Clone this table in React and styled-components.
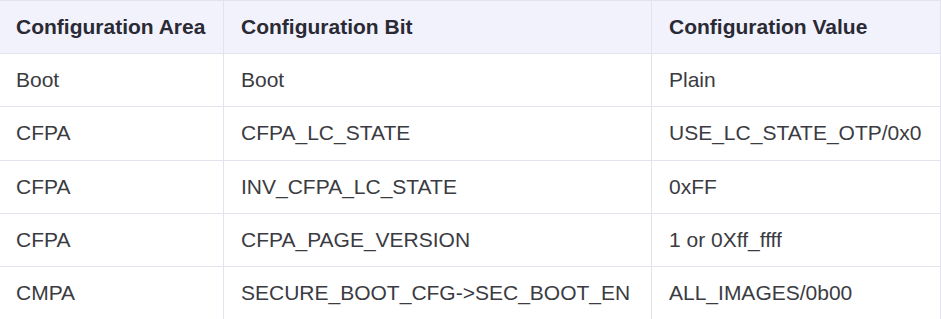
import React from 'react'
import styled, { createGlobalStyle } from 'styled-components'

const GlobalStyle = createGlobalStyle`
  html, body {
    margin: 0;
    padding: 0;
    background: #fff;
    overflow: hidden;
  }
  body {
    font-family: "Liberation Sans", Arial, sans-serif;
  }
`

const Table = styled.table`
  border-collapse: collapse;
  table-layout: fixed;
  width: 941px;
  margin-left: -1px;
  font-size: 21px;
`

const Col = styled.col`
  width: ${p => p.$w}px;
`

const Head = styled.th`
  background: #f2f2fc;
  color: #2a2a35;
  font-weight: 700;
  text-align: left;
  height: 52px;
  padding: 0 16px 0 17px;
  border: 1px solid #e3e3ee;
  white-space: nowrap;
  &:first-child {
    padding-left: 16px;
  }
`

const Cell = styled.td`
  color: #3b3b42;
  height: 52.3px;
  padding: 0 16px 0 17px;
  border: 1px solid #e3e3ee;
  white-space: nowrap;
  &:first-child {
    padding-left: 16px;
  }
`

const columns = ['Configuration Area', 'Configuration Bit', 'Configuration Value']
const widths = [224, 428, 289]

const rows = [
  ['Boot', 'Boot', 'Plain'],
  ['CFPA', 'CFPA_LC_STATE', 'USE_LC_STATE_OTP/0x0'],
  ['CFPA', 'INV_CFPA_LC_STATE', '0xFF'],
  ['CFPA', 'CFPA_PAGE_VERSION', '1 or 0Xff_ffff'],
  ['CMPA', 'SECURE_BOOT_CFG->SEC_BOOT_EN', 'ALL_IMAGES/0b00'],
]

export default function App() {
  return (
    <>
      <GlobalStyle />
      <Table>
        <colgroup>
          {widths.map((w, i) => <Col key={i} $w={w} />)}
        </colgroup>
        <thead>
          <tr>
            {columns.map(c => <Head key={c}>{c}</Head>)}
          </tr>
        </thead>
        <tbody>
          {rows.map((r, i) => (
            <tr key={i}>
              {r.map((v, j) => <Cell key={j}>{v}</Cell>)}
            </tr>
          ))}
        </tbody>
      </Table>
    </>
  )
}
